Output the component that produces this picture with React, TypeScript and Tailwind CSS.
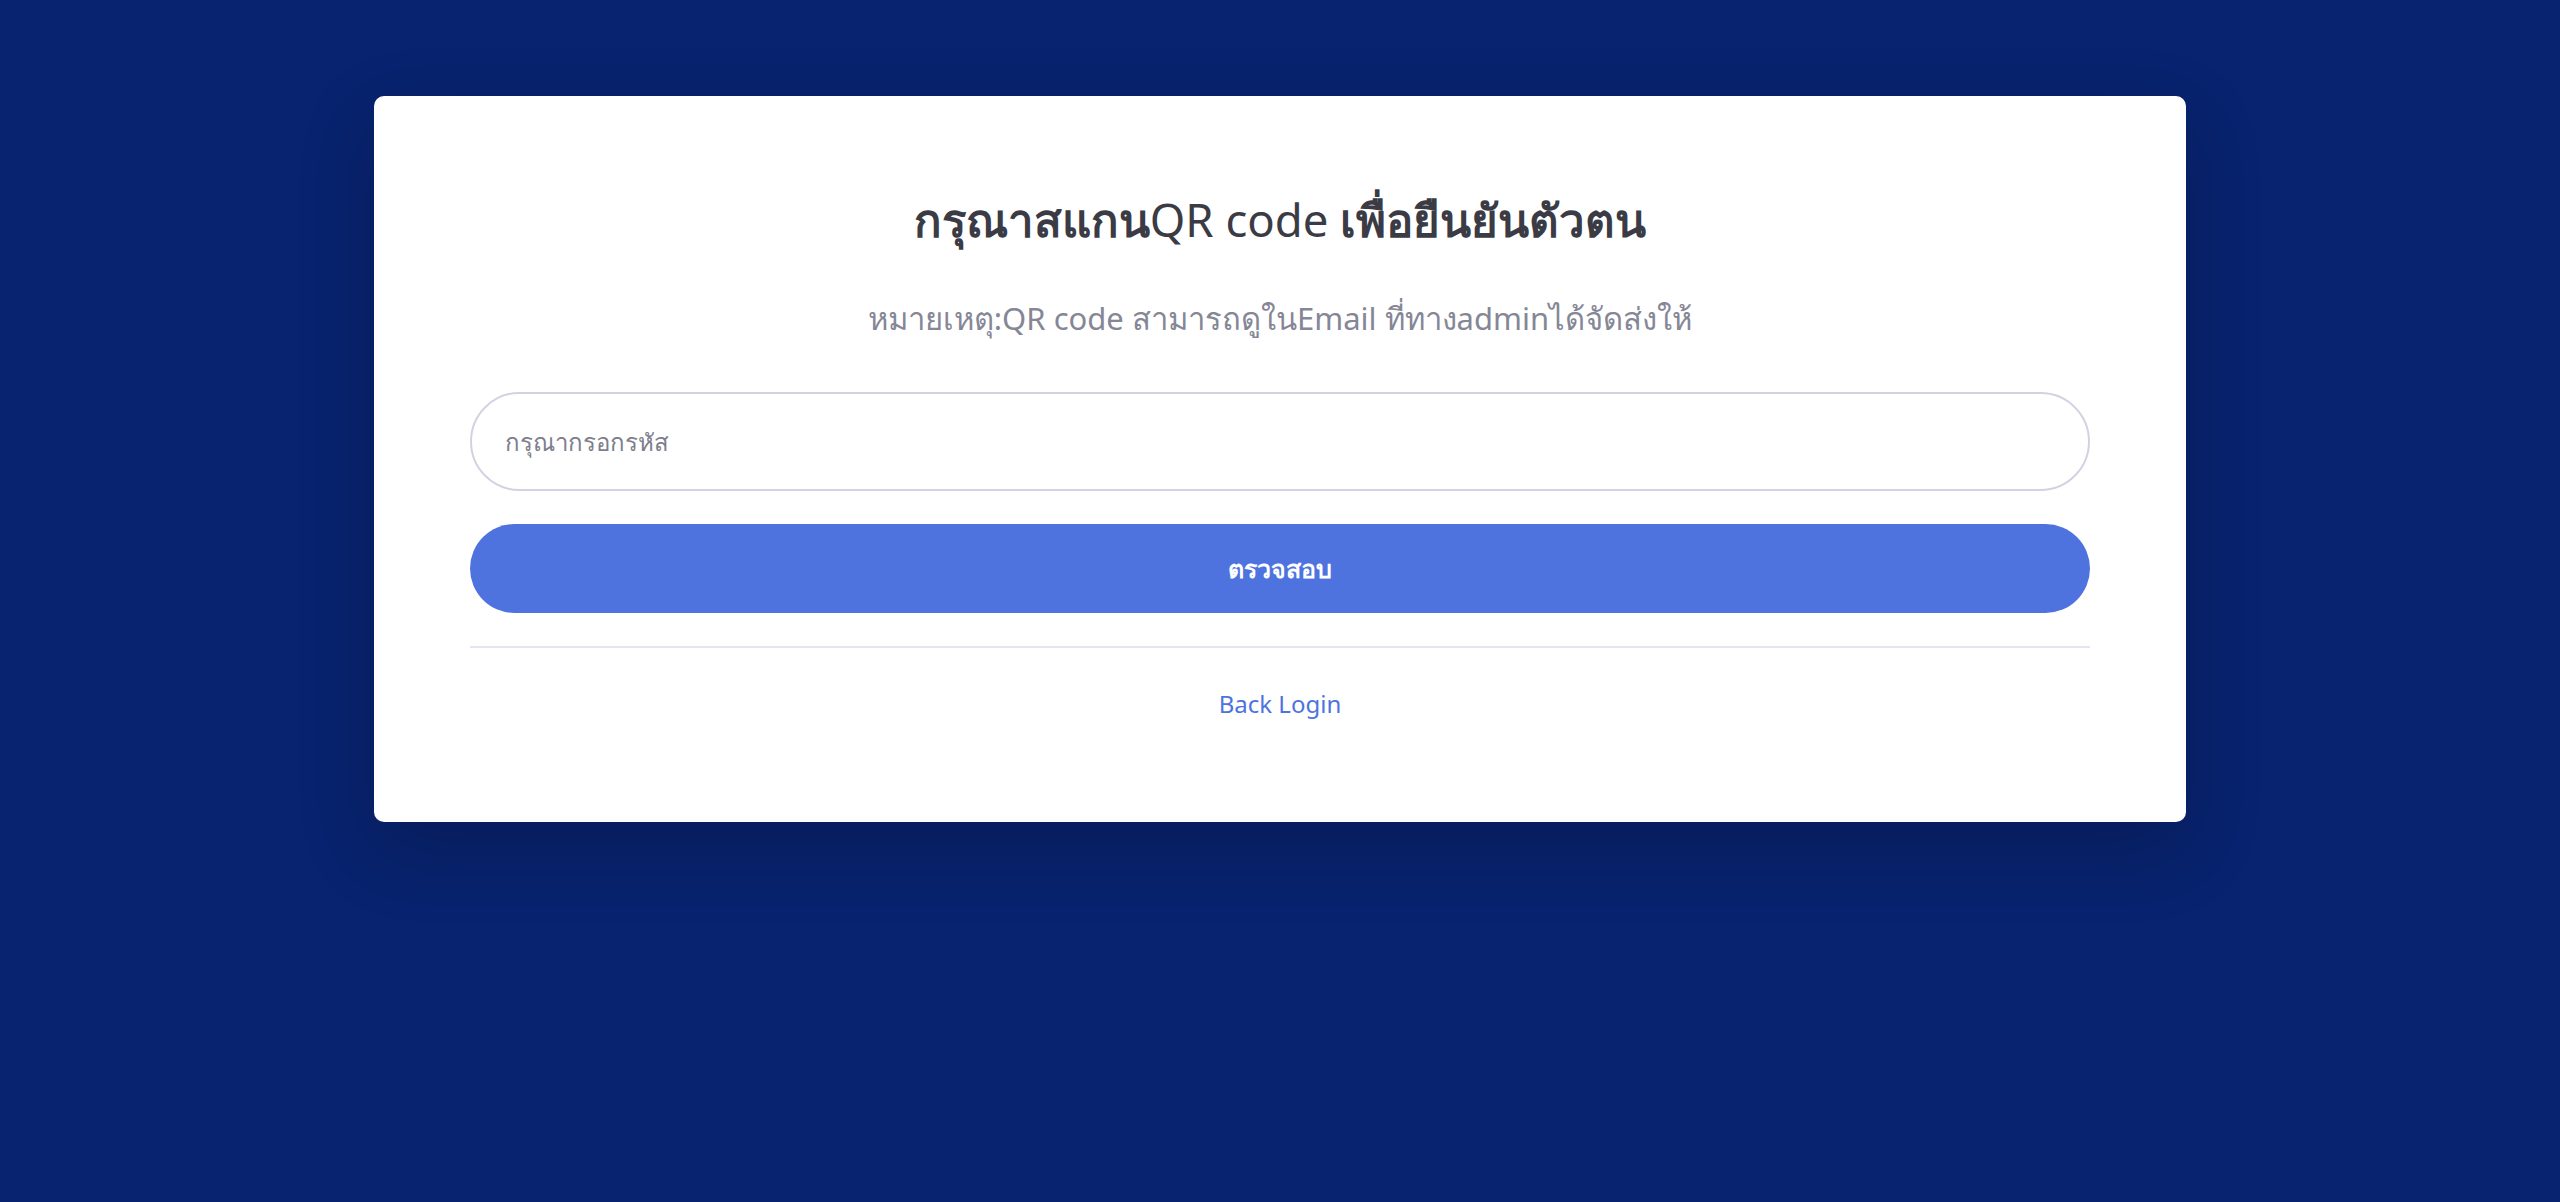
import React from "react";

export default function App() {
  return (
    <div
      className="min-h-[1202px] w-full bg-[#08236f] pt-[96px]"
      style={{ fontFamily: '"Noto Sans", "Open Sans", sans-serif' }}
    >
      <div className="mx-auto w-[1812px] rounded-[10px] bg-white px-[96px] pt-[96px] pb-[100px] shadow-[0_26px_78px_rgba(0,0,0,0.2)]">
        <h1 className="text-center text-[45.5px] leading-[54px] font-normal text-[#3a3b45]">
          <span className="font-semibold">กรุณาสแกน</span>QR code{" "}
          <span className="font-semibold">เพื่อยืนยันตัวตน</span>
        </h1>
        <p className="mt-[49px] text-center text-[31px] leading-[46px] text-[#858796]">
          หมายเหตุ:QR code สามารถดูในEmail ที่ทางadminได้จัดส่งให้
        </p>
        <div className="mt-[51px]">
          <input
            type="text"
            placeholder="กรุณากรอกรหัส"
            className="block h-[99px] w-full rounded-full border-2 border-[#d1d3e2] bg-white px-[33px] text-[24px] font-medium text-[#6e707e] outline-none placeholder:text-[#7c7e8c]"
          />
        </div>
        <button
          type="button"
          className="mt-[33px] flex h-[89px] w-full items-center justify-center rounded-full bg-[#4e73df] text-[25px] font-bold text-white"
        >
          ตรวจสอบ
        </button>
        <hr className="mt-[33px] border-t-2 border-[#e3e6f0]" />
        <div className="mt-[38px] text-center text-[24px] leading-[36px]">
          <a href="#" className="text-[#4e73df]">
            Back Login
          </a>
        </div>
      </div>
    </div>
  );
}
